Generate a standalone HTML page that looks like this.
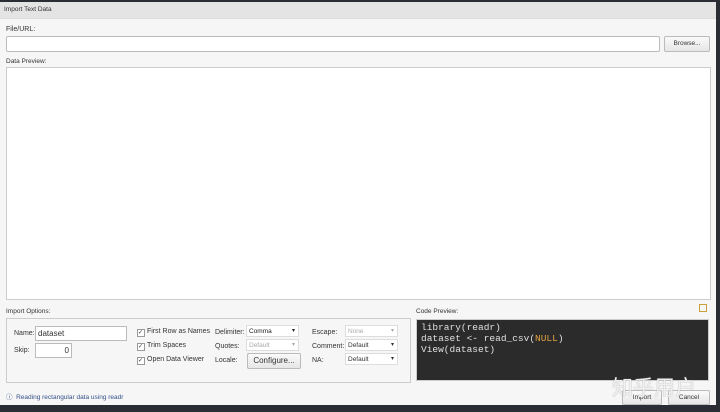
<html><head><style>
body{margin:0;width:720px;height:412px;background:#2a2d33;position:relative;overflow:hidden;font-family:"Liberation Sans",sans-serif;font-size:7px;color:#333}
.a{position:absolute}
.win{left:0;top:2px;width:716px;height:403px;background:#f6f6f6}
.tb{left:0;top:0;width:716px;height:16px;background:#e4e4e4;border-bottom:1px solid #ddd}
.in{background:#fff;border:1px solid #bbb}
.btn{background:linear-gradient(#fafafa,#e6e6e6);border:1px solid #bbb;border-radius:2px;text-align:center}
.sel{background:#fff;border:1px solid #ddd;font-size:6.5px;padding-left:2px;box-sizing:border-box}
.sel:after{content:"▾";position:absolute;right:3px;font-size:6px}
.cb{display:inline-block;width:6px;height:6px;border:1px solid #999;background:#fff;font-size:6px;line-height:6px;vertical-align:-1px;margin-right:2px}
</style></head><body>
<div class="a win">
<div class="a tb"><span class="a" style="left:4px;top:4px;font-size:6.5px">Import Text Data</span></div>
<span class="a" style="left:6px;top:24px">File/URL:</span>
<div class="a in" style="left:6px;top:34px;width:652px;height:14px;border-radius:2px"></div>
<div class="a btn" style="left:664px;top:34px;width:44px;height:14px;line-height:14px;font-size:6.5px">Browse...</div>
<span class="a" style="left:6px;top:56px;font-size:6.5px">Data Preview:</span>
<div class="a in" style="left:6px;top:65px;width:703px;height:231px;border-color:#ccc"></div>
<span class="a" style="left:6px;top:306px;font-size:6.5px">Import Options:</span>
<div class="a" style="left:6px;top:316px;width:403px;height:63px;border:1px solid #ccc"></div>
<span class="a" style="left:14px;top:328px">Name:</span>
<div class="a in" style="left:35px;top:324px;width:88px;height:13px;font-size:8px;line-height:13px;padding-left:2px">dataset</div>
<span class="a" style="left:14px;top:345px">Skip:</span>
<div class="a in" style="left:35px;top:341px;width:33px;height:13px;font-size:8px;line-height:13px;text-align:right;padding-right:2px">0</div>
<span class="a" style="left:137px;top:326px"><span class="cb">✓</span>First Row as Names</span>
<span class="a" style="left:137px;top:340px"><span class="cb">✓</span>Trim Spaces</span>
<span class="a" style="left:137px;top:354px"><span class="cb">✓</span>Open Data Viewer</span>
<span class="a" style="left:215px;top:327px">Delimiter:</span>
<div class="a sel" style="left:246px;top:323px;width:53px;height:12px;line-height:11px;color:#222">Comma</div>
<span class="a" style="left:215px;top:341px">Quotes:</span>
<div class="a sel" style="left:246px;top:337px;width:53px;height:12px;line-height:11px;color:#aaa">Default</div>
<span class="a" style="left:215px;top:355px">Locale:</span>
<div class="a btn" style="left:247px;top:351px;width:52px;height:14px;line-height:14px;font-size:8px">Configure...</div>
<span class="a" style="left:312px;top:327px">Escape:</span>
<div class="a sel" style="left:345px;top:323px;width:53px;height:12px;line-height:11px;color:#aaa">None</div>
<span class="a" style="left:312px;top:341px">Comment:</span>
<div class="a sel" style="left:345px;top:337px;width:53px;height:12px;line-height:11px">Default</div>
<span class="a" style="left:312px;top:355px">NA:</span>
<div class="a sel" style="left:345px;top:351px;width:53px;height:12px;line-height:11px">Default</div>
<span class="a" style="left:416px;top:306px;font-size:6.5px">Code Preview:</span>
<div class="a" style="left:699px;top:302px;width:6px;height:6px;border:1px solid #c9a13a"></div>
<div class="a" style="left:416px;top:317px;width:293px;height:62px;background:#2b2b2b;border:1px solid #ccc;font-family:'Liberation Mono',monospace;font-size:9.5px;line-height:11px;color:#e0e0e0;padding:2px 4px;box-sizing:border-box">library(readr)<br>dataset &lt;- read_csv(<span style="color:#e0a040">NULL</span>)<br>View(dataset)</div>
<span class="a" style="left:6px;top:389px;color:#34508a;font-size:6.5px">ⓘ&nbsp; Reading rectangular data using readr</span>
<div class="a btn" style="left:622px;top:388px;width:38px;height:13px;line-height:13px;font-size:6.5px">Import</div>
<div class="a btn" style="left:668px;top:388px;width:40px;height:13px;line-height:13px;font-size:6.5px">Cancel</div>
<span class="a" style="left:612px;top:370px;font-family:'Noto Sans CJK SC',sans-serif;font-size:21px;color:rgba(255,255,255,.85);text-shadow:0 0 1px #888">知乎用户</span>
</div>
</body></html>
